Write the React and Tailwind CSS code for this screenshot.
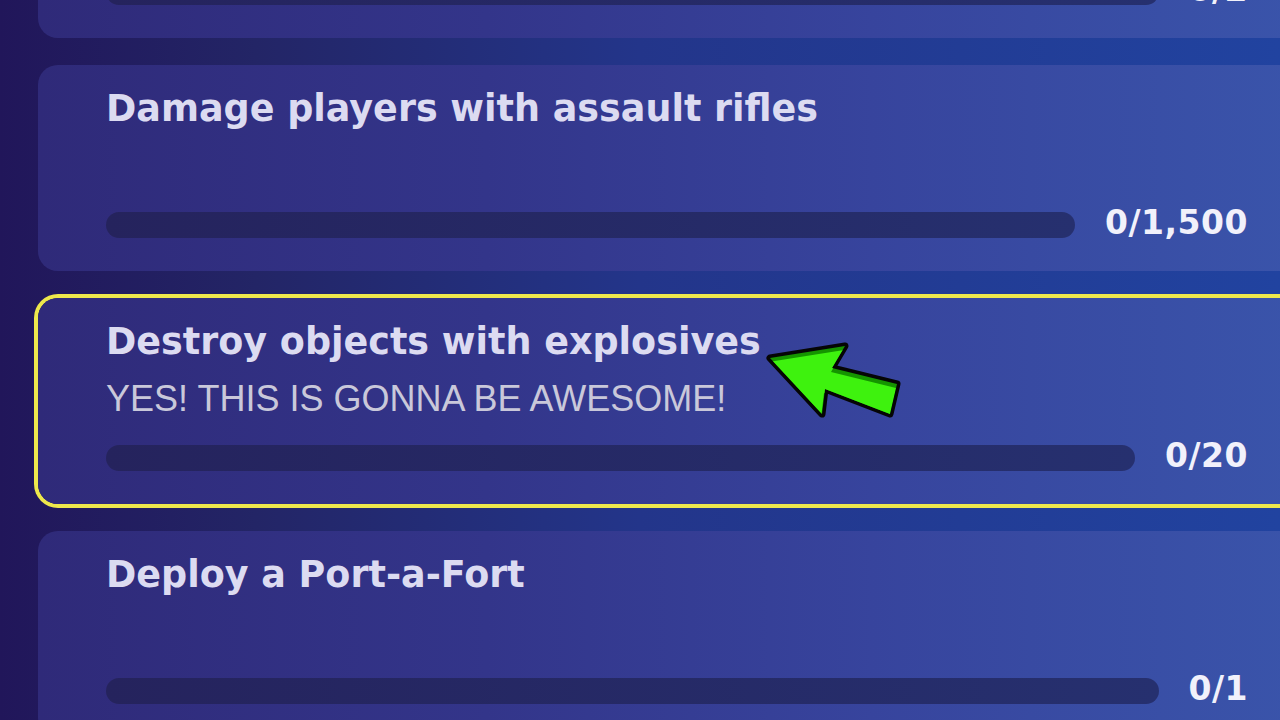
import React from "react";

const quests = [
  { id: "chests", count: "0/2" },
  { id: "rifles", title: "Damage players with assault rifles", count: "0/1,500" },
  {
    id: "explosives",
    title: "Destroy objects with explosives",
    note: "YES! THIS IS GONNA BE AWESOME!",
    count: "0/20",
    active: true,
  },
  { id: "fort", title: "Deploy a Port-a-Fort", count: "0/1" },
];

const ARROW = "8,22 83,10 70,32 135,48 128,78 63,53 60,78";

// big green pointer drawn over the list
const Arrow = () => (
  <svg
    className="absolute left-[762px] top-[336px]"
    width="145"
    height="90"
    viewBox="0 0 145 90"
  >
    <defs>
      <clipPath id="arrow-clip">
        <polygon points={ARROW} />
      </clipPath>
    </defs>
    <polygon
      points={ARROW}
      fill="#000"
      stroke="#050505"
      strokeWidth="7"
      strokeLinejoin="round"
    />
    <polygon points={ARROW} fill="#159400" />
    <g clipPath="url(#arrow-clip)">
      <polygon points={ARROW} fill="#3ef20e" transform="translate(-1 4)" />
    </g>
  </svg>
);

const QuestCard = ({ title, note, count, active }) => (
  <div
    className={
      "ml-[38px] mr-[-40px] h-[206px] shrink-0 rounded-[20px] pl-[68px] pr-[72px] pt-[26px] pb-[33px] flex flex-col bg-[linear-gradient(90deg,#2f2a79_0%,#33358a_35%,#37449d_65%,#3a55ab_100%)] " +
      (active ? "ring-[4px] ring-[#eee84c]" : "")
    }
  >
    {title && (
      <h3 className="font-['DejaVu_Sans',sans-serif] font-bold text-[36.5px] leading-none text-[#dcdbf1] whitespace-nowrap">
        {title}
      </h3>
    )}
    {note && (
      <p className="mt-[20px] font-['Liberation_Sans',Arial,sans-serif] text-[36px] leading-none text-[#c9c8da] whitespace-nowrap">
        {note}
      </p>
    )}
    <div className="mt-auto h-[26px] flex items-center gap-[30px]">
      <div className="flex-1 h-[26px] rounded-full bg-[linear-gradient(90deg,#25235d,#26306f)]" />
      <span className="font-['DejaVu_Sans',sans-serif] font-bold text-[33px] tracking-[0.5px] leading-[26px] text-[#f1f1fb] -translate-y-[2px]">
        {count}
      </span>
    </div>
  </div>
);

export default function App() {
  return (
    <div className="relative w-[1280px] h-[720px] overflow-hidden bg-[linear-gradient(90deg,#21165a_0%,#232566_20%,#23358a_50%,#2143a0_100%)]">
      <div className="mt-[-168px] flex flex-col gap-[27px]">
        {quests.map((q) => (
          <QuestCard key={q.id} {...q} />
        ))}
      </div>
      <Arrow />
    </div>
  );
}
